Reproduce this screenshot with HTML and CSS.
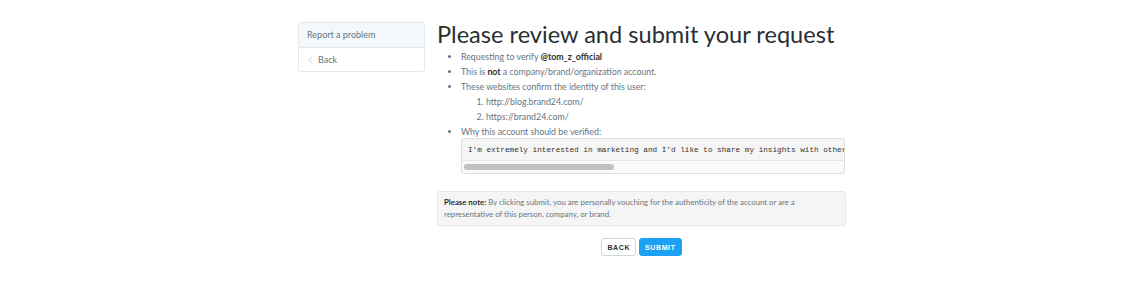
FILE: index.html
```html
<!DOCTYPE html>
<html lang="en">
<head>
    <meta charset="UTF-8">
    <meta name="viewport" content="width=device-width, initial-scale=1.0">
    <title>Request verification</title>
    <link rel="stylesheet" href="styles.css">
</head>
<body>
    <div class="page">
        <div class="sidebar">
            <div class="sidebar-head">Report a problem</div>
            <a class="sidebar-link" href="#">
                <svg class="chev" width="5" height="8" viewBox="0 0 5 8"><path d="M4.2 0.6 L1 4 L4.2 7.4" fill="none" stroke="#ccd6dd" stroke-width="1"/></svg>
                Back
            </a>
        </div>

        <div class="content">
            <h1>Please review and submit your request</h1>
            <ul class="summary">
                <li>Requesting to verify <b>@tom_z_official</b></li>
                <li>This is <b>not</b> a company/brand/organization account.</li>
                <li>These websites confirm the identity of this user:
                    <ol>
                        <li>http://blog.brand24.com/</li>
                        <li>https://brand24.com/</li>
                    </ol>
                </li>
                <li>Why this account should be verified:
                    <div class="reason">
                        <pre>I'm extremely interested in marketing and I'd like to share my insights with others.</pre>
                        <div class="scroll"><div class="thumb"></div></div>
                    </div>
                </li>
            </ul>

            <div class="note">
                <b>Please note:</b> By clicking submit, you are personally vouching for the authenticity of the account or are a representative of this person, company, or brand.
            </div>

            <div class="actions">
                <button type="button" class="btn">Back</button>
                <button type="submit" class="btn btn-primary">Submit</button>
            </div>
        </div>
    </div>
</body>
</html>
```

FILE: styles.css
```css
body {
    margin: 0;
    background-color: #fff;
    font-family: Lato, "Liberation Sans", Arial, sans-serif;
    color: #66757f;
}

.page {
    width: 552px;
    margin: 0 auto;
    padding: 22px 0 0 4px;
    box-sizing: border-box;
    display: flex;
    gap: 12px;
    align-items: flex-start;
}

.sidebar {
    width: 127px;
    flex-shrink: 0;
    border: 1px solid #e1e8ed;
    border-radius: 3px;
    box-sizing: border-box;
    font-size: 9px;
}

.sidebar-head {
    height: 24px;
    line-height: 24px;
    padding-left: 8px;
    background-color: #f5f8fa;
    border-bottom: 1px solid #e1e8ed;
    color: #66757f;
}

.sidebar-link {
    display: flex;
    align-items: center;
    gap: 5px;
    height: 23px;
    padding-left: 9px;
    color: #66757f;
    text-decoration: none;
}

.content {
    width: 409px;
}

h1 {
    margin: 0;
    font-family: Lato, "Liberation Sans", sans-serif;
    font-weight: 400;
    font-size: 23.6px;
    line-height: 24px;
    color: #292f33;
    white-space: nowrap;
}

.summary {
    margin: 3px 0 0;
    padding-left: 24px;
    font-size: 8.8px;
    line-height: 15px;
}

.summary b {
    color: #292f33;
}

.summary ol {
    margin: 0;
    padding-left: 25px;
}

.reason {
    margin: -1px 0 0 0;
    width: 384px;
    background-color: #f5f5f5;
    border: 1px solid #ddd;
    border-radius: 3px;
    box-sizing: border-box;
    overflow: hidden;
}

.reason pre {
    margin: 0;
    padding: 4px 6px 3px;
    font-family: "Liberation Mono", "DejaVu Sans Mono", monospace;
    font-size: 7.7px;
    line-height: 14px;
    color: #333;
    white-space: pre;
    overflow: hidden;
}

.scroll {
    border-top: 1px solid #e6e6e6;
    background-color: #fafafa;
    padding: 3px 2px 3px;
}

.thumb {
    width: 150px;
    height: 6px;
    border-radius: 3px;
    background-color: #c1c1c1;
}

.note {
    margin-top: 17px;
    padding: 4px 6px 5px;
    background-color: #f5f5f5;
    border: 1px solid #e6e6e6;
    border-radius: 2px;
    font-size: 7.8px;
    line-height: 12px;
    color: #66757f;
}

.note b {
    color: #292f33;
}

.actions {
    display: flex;
    justify-content: center;
    gap: 3px;
    margin-top: 12px;
}

.btn {
    height: 18px;
    padding: 0 5px;
    border: 1px solid #ccd6dd;
    border-radius: 3px;
    background-color: #fff;
    color: #292f33;
    font-family: "Liberation Sans", Arial, sans-serif;
    font-size: 7px;
    font-weight: bold;
    letter-spacing: 0.6px;
    text-transform: uppercase;
    cursor: pointer;
}

.btn-primary {
    background-color: #1da1f2;
    border-color: #1da1f2;
    color: #fff;
}
```
